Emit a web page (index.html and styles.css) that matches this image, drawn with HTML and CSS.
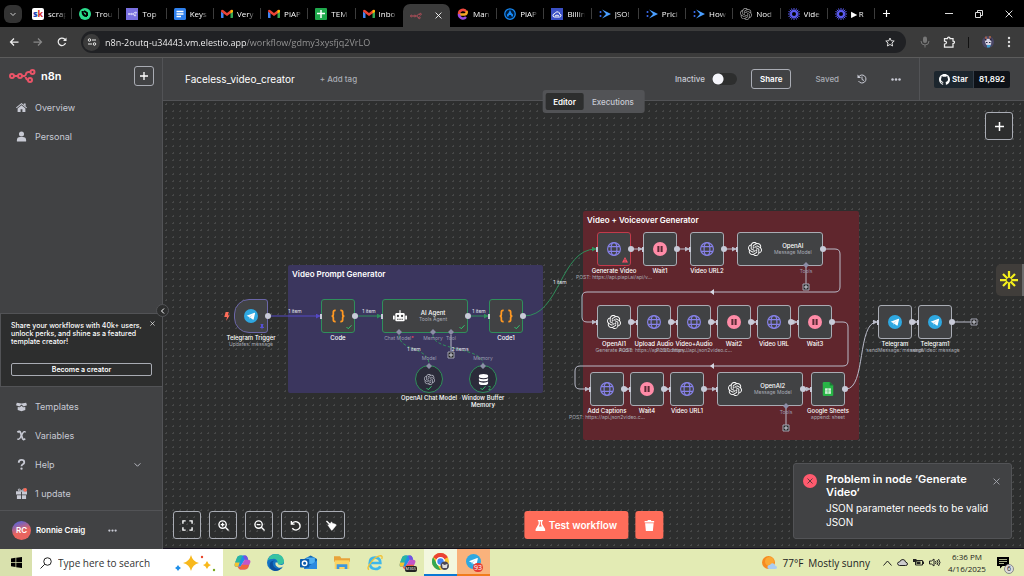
FILE: index.html
```html
<!DOCTYPE html>
<html lang="en">
<head>
    <meta charset="UTF-8">
    <meta name="viewport" content="width=device-width, initial-scale=1.0">
    <title>Faceless_video_creator - n8n</title>
    <link rel="stylesheet" href="styles.css">
</head>
<body>
    <!-- Icon set -->
    <svg class="sprite" aria-hidden="true">
        <symbol id="gmail" viewBox="0 0 24 24">
            <path fill="#4285f4" d="M1 20h4V11L0 7v11.500q0 1.500 1 1.500z"/>
            <path fill="#34a853" d="M19 20h4q1-.5 1-1.500V7l-5 4z"/>
            <path fill="#ea4335" d="M0 7V6q1-4 5-1.500l7 5.500 7-5.500q4-2.500 5 1.500v1l-5 4-7 5-7-5z"/>
            <path fill="#fbbc04" d="M19 11V5q4-3 5 1v2z"/>
        </symbol>
        <symbol id="n8n" viewBox="0 0 54 28">
            <g fill="none" stroke="currentColor" stroke-width="4">
                <circle cx="6" cy="14" r="4"/><circle cx="22" cy="14" r="4"/>
                <circle cx="47" cy="6" r="4"/><circle cx="42" cy="22" r="4"/>
                <path d="M10 14h8M26 14h5M43 6h-4q-4 0-5 4-1 4-3 4 2 0 3 4 1 4 4 4"/>
            </g>
        </symbol>
        <symbol id="flow" viewBox="0 0 24 24">
            <path d="M6 3l18 9-18 9 8-9z" fill="#4a9eff"/>
            <circle cx="3" cy="8" r="2" fill="#3b6ef5"/><circle cx="3" cy="16" r="2" fill="#3b6ef5"/>
        </symbol>
        <symbol id="burst" viewBox="0 0 24 24">
            <circle cx="12" cy="12" r="6" fill="none" stroke="currentColor" stroke-width="4"/>
            <path d="M12 0v5M12 19v5M0 12h5M19 12h5M3.500 3.500l4 4M16.500 16.500l4 4M20.500 3.500l-4 4M7.500 16.500l-4 4M7 1l2 5M15 18l2 5M17 1l-2 5M9 18l-2 5M1 7l5 2M18 15l5 2M1 17l5-2M18 9l5-2" stroke="currentColor" stroke-width="2"/>
        </symbol>
        <symbol id="openai" viewBox="0 0 24 24">
            <path fill="currentColor" d="M22.2819 9.8211a5.9847 5.9847 0 0 0-.5157-4.9108 6.0462 6.0462 0 0 0-6.5098-2.9A6.0651 6.0651 0 0 0 4.9807 4.1818a5.9847 5.9847 0 0 0-3.9977 2.9 6.0462 6.0462 0 0 0 .7427 7.0966 5.98 5.98 0 0 0 .511 4.9107 6.051 6.051 0 0 0 6.5146 2.9001A5.9847 5.9847 0 0 0 13.2599 24a6.0557 6.0557 0 0 0 5.7718-4.2058 5.9894 5.9894 0 0 0 3.9977-2.9001 6.0557 6.0557 0 0 0-.7475-7.0729zm-9.022 12.6081a4.4755 4.4755 0 0 1-2.8764-1.0408l.1419-.0804 4.7783-2.7582a.7948.7948 0 0 0 .3927-.6813v-6.7369l2.02 1.1686a.071.071 0 0 1 .038.052v5.5826a4.504 4.504 0 0 1-4.4945 4.4944zm-9.6607-4.1254a4.4708 4.4708 0 0 1-.5346-3.0137l.142.0852 4.783 2.7582a.7712.7712 0 0 0 .7806 0l5.8428-3.3685v2.3324a.0804.0804 0 0 1-.0332.0615L9.74 19.9502a4.4992 4.4992 0 0 1-6.1408-1.6464zM2.3408 7.8956a4.485 4.485 0 0 1 2.3655-1.9728V11.6a.7664.7664 0 0 0 .3879.6765l5.8144 3.3543-2.0201 1.1685a.0757.0757 0 0 1-.071 0l-4.8303-2.7865A4.504 4.504 0 0 1 2.3408 7.872zm16.5963 3.8558L13.1038 8.364 15.1192 7.2a.0757.0757 0 0 1 .071 0l4.8303 2.7913a4.4944 4.4944 0 0 1-.6765 8.1042v-5.6772a.79.79 0 0 0-.407-.667zm2.0107-3.0231l-.142-.0852-4.7735-2.7818a.7759.7759 0 0 0-.7854 0L9.409 9.2297V6.8974a.0662.0662 0 0 1 .0284-.0615l4.8303-2.7866a4.4992 4.4992 0 0 1 6.6802 4.66zM8.3065 12.863l-2.02-1.1638a.0804.0804 0 0 1-.038-.0567V6.0742a4.4992 4.4992 0 0 1 7.3757-3.4537l-.142.0805L8.704 5.459a.7948.7948 0 0 0-.3927.6813zm1.0976-2.3654l2.602-1.4998 2.6069 1.4998v2.9994l-2.5974 1.4997-2.6067-1.4997Z"/>
        </symbol>
        <symbol id="telegram" viewBox="0 0 24 24">
            <circle cx="12" cy="12" r="12" fill="#2fa8e1"/>
            <path fill="#fff" d="M4.500 11.700L18 6.300q1.200-.3.900 1.200l-2.300 10q-.4 1.200-1.500.6L8.800 13.600z"/>
            <path fill="#b5d5ea" d="M8.800 13.600l7-4.600-5.500 5.500-.4 3.500z"/>
        </symbol>
        <symbol id="globe" viewBox="0 0 24 24">
            <g fill="none" stroke="#8681e8" stroke-width="2">
                <circle cx="12" cy="12" r="11"/><ellipse cx="12" cy="12" rx="5" ry="11"/>
                <path d="M2 8h20M2 16h20"/>
            </g>
        </symbol>
        <symbol id="pause" viewBox="0 0 24 24">
            <circle cx="12" cy="12" r="12" fill="#ff8ba7"/>
            <path fill="#5c2b36" d="M7.500 7h3.500v10H7.500zM13 7h3.500v10H13z"/>
        </symbol>
        <symbol id="braces" viewBox="0 0 24 24">
            <path fill="none" stroke="#ff9922" stroke-width="3" d="M8 2.500H7q-3 0-3 3V9q0 3-3 3 3 0 3 3v3.500q0 3 3 3h1M16 2.500h1q3 0 3 3V9q0 3 3 3-3 0-3 3v3.500q0 3-3 3h-1"/>
        </symbol>
        <symbol id="robot" viewBox="0 0 24 24">
            <g fill="#fff">
                <rect x="4" y="7" width="16" height="14" rx="2"/><rect x="0" y="11" width="3" height="7" rx="1"/>
                <rect x="21" y="11" width="3" height="7" rx="1"/><rect x="11" y="2" width="2" height="6"/>
            </g>
            <circle cx="8.500" cy="12" r="2" fill="#414244"/><circle cx="15.500" cy="12" r="2" fill="#414244"/>
            <path fill="#414244" d="M7 16.500h2.500v2H7zM10.800 16.500h2.500v2h-2.500zM14.500 16.500H17v2h-2.500z"/>
        </symbol>
        <symbol id="database" viewBox="0 0 24 24">
            <g fill="#fff">
                <path d="M2 4q0-4 10-4t10 4v2q0 3-10 3T2 6z"/><path d="M2 9q3 2.500 10 2.500T22 9v4q0 3-10 3T2 13z"/>
                <path d="M2 16.500Q5 19 12 19t10-2.500V20q0 4-10 4T2 20z"/>
            </g>
        </symbol>
        <symbol id="sheets" viewBox="0 0 24 24">
            <path fill="#28b446" d="M3 2q0-2 2-2h10l6 6v16q0 2-2 2H5q-2 0-2-2z"/><path fill="#167a34" d="M15 0l6 6h-6z"/>
            <path fill="#fff" d="M7 11h10v9H7z"/><path stroke="#28b446" d="M7 14h10M7 17h10M12 11v9"/>
        </symbol>
        <symbol id="check" viewBox="0 0 12 12"><path fill="none" stroke="#34c26f" stroke-width="2" d="M1 6l3.500 3.500L11 2.500"/></symbol>
        <symbol id="pin" viewBox="0 0 12 12"><path fill="#5650d6" d="M3 0h6v1L8 2v3l2 2v1H7l-1 4-1-4H2V7l2-2V2L3 1z"/></symbol>
        <symbol id="warning" viewBox="0 0 12 12"><path fill="#ff4f63" d="M6 0l6 11H0z"/><path stroke="#414244" stroke-width="1.500" d="M6 4v3M6 8v1.500"/></symbol>
        <symbol id="bolt" viewBox="0 0 12 20"><path fill="#ff6d5a" d="M3 0h7L8 7h4L4 20l2-9H0z"/></symbol>
        <symbol id="plus" viewBox="0 0 12 12"><path stroke="currentColor" stroke-width="2" d="M6 0v12M0 6h12"/></symbol>
        <symbol id="cross" viewBox="0 0 12 12"><path stroke="currentColor" stroke-width="1.500" d="M1 1l10 10M11 1L1 11"/></symbol>
        <symbol id="dots" viewBox="0 0 20 6"><g fill="currentColor"><circle cx="3" cy="3" r="2.500"/><circle cx="10" cy="3" r="2.500"/><circle cx="17" cy="3" r="2.500"/></g></symbol>
        <symbol id="down" viewBox="0 0 12 12"><path fill="none" stroke="currentColor" stroke-width="1.500" d="M1 4l5 5 5-5"/></symbol>
        <symbol id="copilot" viewBox="0 0 24 24">
            <path fill="#1f8fe8" d="M9 2h7q2 0 3 3l1 3h-5L9 18H4q-4 0-3-4L4 6q1-4 5-4z"/>
            <path fill="#29b6a0" d="M4 6q1-4 5-4h3L8 12H1.500z"/>
            <path fill="#f2c531" d="M1.500 12H8l-2 6H4q-4 0-3-4z"/>
            <path fill="#c355c9" d="M15 22H9q-2 0-3-3l-1-1h4l6-10h5q4 0 3 4l-3 7q-1 3-5 3z"/>
            <path fill="#f0653f" d="M15 22H9q-2 0-3-3l-1-1h4l2-3h10l-1 4q-1 3-5 3z"/>
            <path fill="#7a4fe0" d="M16 2q2 0 3 3l1 3h-5l-2-6z"/>
        </symbol>
    </svg>

    <header class="tab-strip">
        <button class="tab-search" aria-label="Search tabs"><svg width="6" height="6"><use href="#down"/></svg></button>
        <div class="tabs">
            <div class="tab"><span class="tab-icon sk"><b>s</b>k</span><span class="tab-title">scrap</span></div>
            <div class="tab">
                <svg class="tab-icon" viewBox="0 0 24 24"><circle cx="12" cy="12" r="12" fill="#2bdc8c"/><path fill="none" stroke="#000" stroke-width="4" d="M7 6q0 10 9 10M10 6l6 4v6"/></svg>
                <span class="tab-title">Trou</span>
            </div>
            <div class="tab"><span class="tab-icon purple"><svg width="9" height="6"><use href="#n8n"/></svg></span><span class="tab-title">Top 1</span></div>
            <div class="tab">
                <svg class="tab-icon" viewBox="0 0 24 24"><rect width="24" height="24" rx="3" fill="#2f80ed"/><path stroke="#fff" stroke-width="3" d="M5 7h14M5 12h14M5 17h9"/></svg>
                <span class="tab-title">Keys</span>
            </div>
            <div class="tab"><svg class="tab-icon"><use href="#gmail"/></svg><span class="tab-title">Very</span></div>
            <div class="tab"><svg class="tab-icon"><use href="#gmail"/></svg><span class="tab-title">PiAP</span></div>
            <div class="tab">
                <svg class="tab-icon" viewBox="0 0 24 24"><rect width="24" height="24" rx="2" fill="#1fa84c"/><path stroke="#fff" stroke-width="3" d="M12 4v16M4 11h16"/></svg>
                <span class="tab-title">TEM</span>
            </div>
            <div class="tab last"><svg class="tab-icon"><use href="#gmail"/></svg><span class="tab-title">Inbo</span></div>
            <div class="tab active">
                <svg class="tab-icon"><use href="#n8n"/></svg>
                <button class="tab-close" aria-label="Close tab"><svg width="7" height="7"><use href="#cross"/></svg></button>
            </div>
            <div class="tab">
                <svg class="tab-icon" viewBox="0 0 24 24"><path fill="none" stroke="#f0483e" stroke-width="5" d="M4 12a8 8 0 0 1 15-4"/><path fill="none" stroke="#f7a823" stroke-width="5" d="M19 6q2 6-4 7H5"/><path fill="none" stroke="#9b4de0" stroke-width="5" d="M4 12a8 8 0 0 0 14 6"/></svg>
                <span class="tab-title">Man</span>
            </div>
            <div class="tab">
                <svg class="tab-icon" viewBox="0 0 24 24"><circle cx="12" cy="12" r="10.500" fill="#001c3a" stroke="#1689f5" stroke-width="2.500"/><path fill="#1689f5" d="M12 4l3 6 3 3v4h-3l-1-3h-4l-1 3H6v-4l3-3z"/></svg>
                <span class="tab-title">PiAP</span>
            </div>
            <div class="tab">
                <svg class="tab-icon" viewBox="0 0 24 24"><rect width="24" height="24" fill="#3a4fc4"/><path fill="none" stroke="#fff" stroke-width="2" d="M6 18q-3-1-2-4t4-3q2-5 7-3 2 1 2 4 4 1 3 4-1 2-3 2zM8 16q4-4 8 0"/></svg>
                <span class="tab-title">Billin</span>
            </div>
            <div class="tab"><svg class="tab-icon"><use href="#flow"/></svg><span class="tab-title">JSO!</span></div>
            <div class="tab"><svg class="tab-icon"><use href="#flow"/></svg><span class="tab-title">Prici</span></div>
            <div class="tab"><svg class="tab-icon"><use href="#flow"/></svg><span class="tab-title">How</span></div>
            <div class="tab"><svg class="tab-icon grey"><use href="#openai"/></svg><span class="tab-title">Nod</span></div>
            <div class="tab"><svg class="tab-icon violet"><use href="#burst"/></svg><span class="tab-title">Vide</span></div>
            <div class="tab"><svg class="tab-icon violet"><use href="#burst"/></svg><span class="tab-title">▶ R</span></div>
        </div>
        <button class="new-tab" aria-label="New tab"><svg width="7" height="7"><use href="#plus"/></svg></button>
        <div class="window-buttons">
            <button aria-label="Minimize"><svg width="8" height="8" viewBox="0 0 8 8"><path stroke="#ddd" d="M0 3.500h8"/></svg></button>
            <button aria-label="Restore"><svg width="8" height="8" viewBox="0 0 8 8"><path fill="none" stroke="#ddd" d="M.5 2.500h5v5h-5zM2.500 2V.5h5v5H6"/></svg></button>
            <button aria-label="Close"><svg width="8" height="8"><use href="#cross"/></svg></button>
        </div>
    </header>

    <div class="toolbar">
        <button aria-label="Back"><svg width="10" height="10" viewBox="0 0 20 20"><path fill="none" stroke="#eee" stroke-width="2.500" d="M19 10H3M10 3l-7 7 7 7"/></svg></button>
        <button aria-label="Forward"><svg width="10" height="10" viewBox="0 0 20 20"><path fill="none" stroke="#888" stroke-width="2.500" d="M1 10h16M10 3l7 7-7 7"/></svg></button>
        <button aria-label="Reload"><svg width="10" height="10" viewBox="0 0 20 20"><path fill="none" stroke="#eee" stroke-width="2.500" d="M17 12a7.500 7.500 0 1 1-2-8l3 3"/><path fill="#eee" d="M19 1v7h-7z"/></svg></button>
        <div class="omnibox">
            <span class="site-info"><svg width="10" height="10" viewBox="0 0 20 20"><g fill="none" stroke="#eee" stroke-width="2"><circle cx="5" cy="6" r="2.500"/><path d="M10 6h8M2 14h8"/><circle cx="15" cy="14" r="2.500"/></g></svg></span>
            <input type="text" class="url" aria-label="Address" value="n8n-2outq-u34443.vm.elestio.app/workflow/gdmy3xysfjq2VrLO">
            <svg width="10" height="10" viewBox="0 0 20 20"><path fill="none" stroke="#ddd" stroke-width="2" d="M10 2l2.400 5.500 6 .5-4.500 4 1.400 6L10 15l-5.300 3 1.400-6L1.600 8l6-.5z"/></svg>
        </div>
        <div class="toolbar-end">
            <svg width="10" height="12" viewBox="0 0 20 24"><rect x="6" y="1" width="8" height="13" rx="4" fill="#777"/><path fill="none" stroke="#777" stroke-width="2" d="M2 10q0 8 8 8t8-8M10 18v5"/></svg>
            <svg width="12" height="12" viewBox="0 0 24 24"><path fill="none" stroke="#eee" stroke-width="2.500" d="M3 5h6q0-3 2.500-3T14 5h6v5q3 0 3 2.500T20 15v7H3v-6q4 0 4-3t-4-3z"/></svg>
            <span class="divider"></span>
            <svg width="12" height="12" viewBox="0 0 24 24"><circle cx="12" cy="12" r="12" fill="#4a4766"/><path fill="#d8d4e4" d="M5 8q7-5 14 0l-1 9q-5 5-10 0z"/><path fill="#23233f" d="M6 4l4 4-5 2zM18 3l-3 5 5 2zM8 12h3v2H8zM14 12h3v2h-3z"/><path fill="#e8793d" d="M7 1h2v5H7zM15 0h2v5h-2z"/><path fill="#3f9bc9" d="M10 18h8l-3 5h-5z"/></svg>
            <svg width="4" height="12" viewBox="0 0 4 12"><g fill="#ddd"><circle cx="2" cy="2" r="1.200"/><circle cx="2" cy="6" r="1.200"/><circle cx="2" cy="10" r="1.200"/></g></svg>
        </div>
    </div>

    <div class="app">
        <aside class="sidebar">
            <div class="brand">
                <svg class="logo" width="27" height="14"><use href="#n8n"/></svg>
                <span>n8n</span>
                <button class="square-btn small" aria-label="Add"><svg width="8" height="8"><use href="#plus"/></svg></button>
            </div>
            <nav class="menu">
                <a href="#"><svg viewBox="0 0 24 22"><path d="M12 1l12 10-1.500 1.500L12 4 1.500 12.500 0 11zM17 2h4v6l-4-3.500zM12 6l8.500 7v8H14v-6h-4v6H3.500v-8z"/></svg>Overview</a>
                <a href="#"><svg viewBox="0 0 24 24"><circle cx="12" cy="6.500" r="5.500"/><path d="M2 23v-3q0-7 7-7h6q7 0 7 7v3z"/></svg>Personal</a>
            </nav>
            <section class="callout">
                <p>Share your workflows with 40k+ users, unlock perks, and shine as a featured template creator!</p>
                <button class="callout-close" aria-label="Dismiss"><svg width="5" height="5"><use href="#cross"/></svg></button>
                <button class="callout-btn">Become a creator</button>
            </section>
            <nav class="menu bottom">
                <a href="#"><svg viewBox="0 0 26 22"><path d="M2 2l11 2 11-2 2 6-8 3-5-5-5 5-8-3zM4 12l5 1 4-4 4 4 5-1v7l-9 3-9-3z"/></svg>Templates</a>
                <a href="#"><svg viewBox="0 0 24 24"><path fill="none" stroke="currentColor" stroke-width="4" d="M3 5q5-4 7 1l4 12q2 5 6 1"/><path fill="none" stroke="currentColor" stroke-width="3" d="M21 5q-3-4-7 3l-5 9q-3 5-6 2"/></svg>Variables</a>
                <a href="#"><svg viewBox="0 0 24 24"><path fill="none" stroke="currentColor" stroke-width="4" d="M6 8q0-6 6-6t6 5q0 3-3 4.500T12 16"/><circle cx="12" cy="21" r="2.500"/></svg>Help<svg class="chevron"><use href="#down"/></svg></a>
                <a href="#"><svg viewBox="0 0 24 24"><path d="M0 7h11v7H0zM13 7h11v7H13zM2 16h9v8H2zM13 16h9v8h-9z"/><path fill="none" stroke="currentColor" stroke-width="2" d="M12 7Q3 7 5 3t7 4q5-8 7-4t-7 4"/><circle cx="20" cy="4" r="4" fill="#ff6d5a"/></svg>1 update</a>
            </nav>
            <div class="user">
                <span class="avatar">RC</span>
                <span class="user-name">Ronnie Craig</span>
                <button aria-label="User menu"><svg width="9" height="3"><use href="#dots"/></svg></button>
            </div>
            <button class="collapse" aria-label="Collapse sidebar"><svg width="6" height="6" viewBox="0 0 12 12"><path fill="none" stroke="#fff" stroke-width="2" d="M8 1L3 6l5 5"/></svg></button>
        </aside>

        <main class="main">
            <div class="workflow-header">
                <h1>Faceless_video_creator</h1>
                <button class="add-tag">+ Add tag</button>
                <div class="actions">
                    <label class="activator">Inactive <input type="checkbox"></label>
                    <button class="share">Share</button>
                    <span class="saved">Saved</span>
                    <button aria-label="History"><svg width="10" height="10" viewBox="0 0 20 20"><path fill="none" stroke="currentColor" stroke-width="2" d="M3 6a8 8 0 1 1 0 8M10 5v6l4 2"/><path fill="currentColor" d="M1 1v7h7z"/></svg></button>
                    <button aria-label="More"><svg width="10" height="3"><use href="#dots"/></svg></button>
                </div>
                <div class="github">
                    <a href="#" class="gh-star"><svg width="11" height="11" viewBox="0 0 16 16"><path fill="#fff" d="M8 0C3.580 0 0 3.580 0 8c0 3.540 2.290 6.530 5.470 7.590.4.070.55-.17.55-.38 0-.19-.01-.82-.01-1.490-2.010.37-2.530-.49-2.690-.94-.09-.23-.48-.94-.82-1.130-.28-.15-.68-.52-.01-.53.63-.01 1.080.58 1.230.82.72 1.210 1.870.87 2.330.66.070-.52.28-.87.51-1.070-1.780-.2-3.640-.89-3.640-3.950 0-.87.31-1.590.82-2.150-.08-.2-.36-1.020.08-2.120 0 0 .67-.21 2.200.82.64-.18 1.320-.27 2-.27s1.360.09 2 .27c1.530-1.040 2.200-.82 2.200-.82.44 1.100.16 1.920.08 2.120.51.56.82 1.270.82 2.150 0 3.070-1.870 3.750-3.650 3.950.29.25.54.73.54 1.480 0 1.070-.01 1.930-.01 2.200 0 .21.15.46.55.38A8.010 8.010 0 0 0 16 8c0-4.420-3.580-8-8-8Z"/></svg>Star</a>
                    <a href="#" class="gh-count">81,892</a>
                </div>
                <div class="view-switch">
                    <button class="selected">Editor</button>
                    <button>Executions</button>
                </div>
            </div>

            <div class="canvas" id="canvas">
                <section class="sticky prompt"><h2>Video Prompt Generator</h2></section>
                <section class="sticky voiceover"><h2>Video + Voiceover Generator</h2></section>

                <svg class="edges" aria-hidden="true">
                    <defs>
                        <marker id="arrow" viewBox="0 0 6 6" refX="5" refY="3" markerWidth="5" markerHeight="5" orient="auto" markerUnits="userSpaceOnUse"><path d="M0 0l6 3-6 3z" fill="context-stroke"/></marker>
                    </defs>
                    <path class="pinned" d="M106 215H157"/>
                    <path class="ok" d="M193 215H218"/>
                    <path class="ok" d="M305 215H325"/>
                    <path class="ok" d="M361 215C397 215 397 148 433 148"/>
                    <path class="link" d="M468 148H479"/><path class="link" d="M515 148H526"/><path class="link" d="M562 148H573"/>
                    <path class="link" d="M660 148H672Q677 148 677 153V186Q677 191 672 191H424Q419 191 419 196V216Q419 221 424 221H433"/>
                    <path class="link" d="M469 221H473"/><path class="link" d="M509 221H513"/><path class="link" d="M549 221H553"/><path class="link" d="M589 221H593"/><path class="link" d="M629 221H634"/>
                    <path class="link" d="M669 221H680Q685 221 685 226V260Q685 265 680 265H417Q412 265 412 270V283Q412 288 417 288H426"/>
                    <path class="link" d="M462 288H466"/><path class="link" d="M502 288H506"/><path class="link" d="M542 288H553"/><path class="link" d="M641 288H647"/>
                    <path class="link" d="M683 288C703 288 694 221 714 221"/>
                    <path class="link" d="M749 221H754"/>
                    <path class="stub" d="M790 221H808M643 166V183M623 307V324M288 234V250"/>
                    <path class="sub" d="M236 234C236 250 266 246 266 263M270 234C270 250 320 246 320 263"/>
                    <path class="turn" d="M547 191l4-3v6zM547 265l4-3v6z"/>
                    <path class="diamond" d="M236 228l3 3-3 3-3-3zM270 228l3 3-3 3-3-3zM288 228l3 3-3 3-3-3zM643 161l3 3-3 3-3-3zM623 302l3 3-3 3-3-3zM266 262l3 3-3 3-3-3zM320 262l3 3-3 3-3-3z"/>
                    <path class="add-box" d="M285 251h6v6h-6zM640 183h6v6h-6zM620 324h6v6h-6zM808 218h6v6h-6z"/>
                    <path class="add-sign" d="M288 252v4M286 254h4M643 184v4M641 186h4M623 325v4M621 327h4M811 219v4M809 221h4"/>
                    <g class="edge-label">
                        <text x="132" y="212">1 item</text><text x="206" y="212">1 item</text>
                        <text x="316" y="212">1 item</text><text x="397" y="183">1 item</text>
                        <text x="251" y="250">1 item</text><text x="297" y="250">2 items</text>
                    </g>
                    <g class="port-label">
                        <text x="236" y="239">Chat Model<tspan fill="#ff4f63">*</tspan></text><text x="270" y="239">Memory</text><text x="288" y="239">Tool</text>
                        <text x="266" y="259">Model</text><text x="320" y="259">Memory</text>
                        <text x="643" y="172">Tools</text><text x="623" y="313">Tools</text>
                    </g>
                </svg>

                <button class="square-btn add-node" aria-label="Add node"><svg width="9" height="9"><use href="#plus"/></svg></button>
                <button class="assistant" aria-label="Ask assistant">
                    <svg width="18" height="18" viewBox="0 0 24 24"><path stroke="#f4f01c" stroke-width="3" d="M12 0v9M12 15v9M0 12h9M15 12h9M4 4l6 6M14 14l6 6M20 4l-6 6M10 14l-6 6"/></svg>
                </button>

                <div class="controls">
                    <button class="square-btn" aria-label="Fit view"><svg viewBox="0 0 24 24"><path d="M2 8V2h6M16 2h6v6M22 16v6h-6M8 22H2v-6"/></svg></button>
                    <button class="square-btn" aria-label="Zoom in"><svg viewBox="0 0 24 24"><circle cx="10" cy="10" r="8"/><path d="M16 16l7 7M10 6v8M6 10h8"/></svg></button>
                    <button class="square-btn" aria-label="Zoom out"><svg viewBox="0 0 24 24"><circle cx="10" cy="10" r="8"/><path d="M16 16l7 7M6 10h8"/></svg></button>
                    <button class="square-btn" aria-label="Reset zoom"><svg viewBox="0 0 24 24"><path d="M3 2v7h7M3 9q5-7 12-5t7 9-9 9q-5 0-8-4"/></svg></button>
                    <button class="square-btn" aria-label="Tidy up"><svg viewBox="0 0 24 24"><path d="M1 2l9 9"/><path fill="#fff" stroke-width="1" d="M4 11l4-1 4-6 2 3 8 3q1 2-1 3l-7 9q-2 1-3-1z"/></svg></button>
                </div>

                <div class="run">
                    <button class="primary"><svg width="10" height="11" viewBox="0 0 20 22"><path fill="#fff" d="M5 0h10v2.500h-1.500V8L20 19q1 3-2 3H2q-3 0-2-3L6.500 8V2.500H5z"/><path fill="#ff6d5a" d="M9 3h2v6l2 4H7l2-4z"/></svg>Test workflow</button>
                    <button class="primary trash" aria-label="Clear execution"><svg width="10" height="11" viewBox="0 0 20 22"><path fill="#fff" d="M0 2h6l1-2h6l1 2h6v3H0zM1.500 6.500h17L17 22H3z"/></svg></button>
                </div>

                <div class="toast" role="alert">
                    <span class="toast-icon"><svg width="6" height="6"><use href="#cross"/></svg></span>
                    <div>
                        <h2>Problem in node ‘Generate Video‘</h2>
                        <p>JSON parameter needs to be valid JSON</p>
                    </div>
                    <button aria-label="Close"><svg width="7" height="7"><use href="#cross"/></svg></button>
                </div>
            </div>
        </main>
    </div>

    <footer class="taskbar">
        <button class="start" aria-label="Start"><svg width="11" height="11" viewBox="0 0 22 22"><path d="M0 3l9-1.500V10H0zM10.500 1.300L22 0v10H10.500zM0 11.500h9V20l-9-1.500zM10.500 11.500H22V22l-11.500-1.500z"/></svg></button>
        <label class="search">
            <svg width="12" height="12" viewBox="0 0 24 24"><circle cx="15" cy="9" r="7.500" fill="none" stroke="#222" stroke-width="2"/><path stroke="#222" stroke-width="2" d="M9.500 14.500L1 23"/></svg>
            <input type="text" placeholder="Type here to search" aria-label="Search Windows">
            <svg width="42" height="18" viewBox="0 0 42 18">
                <path fill="#f8b81c" d="M16 1q1.500 6.500 8 8-6.500 1.500-8 8-1.500-6.500-8-8 6.500-1.500 8-8z"/>
                <path fill="#f8b81c" d="M32 7q1 3 4 4-3 1-4 4-1-3-4-4 3-1 4-4z"/>
                <path fill="#1f8fe8" d="M3 11q1 2 3 3-2 1-3 3-1-2-3-3 2-1 3-3z"/>
                <circle cx="27" cy="3" r="1.200" fill="#e8452c"/><circle cx="39" cy="16" r="1.200" fill="#7aa81f"/>
            </svg>
        </label>
        <div class="task-icons">
            <button aria-label="Copilot"><svg width="17" height="17"><use href="#copilot"/></svg></button>
            <button aria-label="Edge"><svg width="17" height="17" viewBox="0 0 24 24"><circle cx="12" cy="12" r="12" fill="#1473c4"/><path fill="#37c4a0" d="M1 9Q4 0 13 0q10 1 11 10 0 5-6 5-4 0-3-3-1-6-7-5-5 0-7 2z"/><path fill="#0c4f9c" d="M8 12q0 8 8 9 4 0 6-3-4 6-11 6Q2 22 4 13q2-4 7-4-3 1-3 3z"/><path fill="#e3ebb4" d="M15 12q0 4 6 3.500L24 14v3q-4 3-8 2-5-2-4-7z"/></svg></button>
            <button aria-label="Outlook"><svg width="17" height="15" viewBox="0 0 24 20"><path fill="#1066b5" d="M6 5l9-5 9 5v14H6z"/><path fill="#50b0f0" d="M9 3h12v9H9z"/><path fill="#2b8ae0" d="M6 19L24 7v12z"/><rect y="5" width="13" height="12" rx="1" fill="#0b5cad"/><circle cx="6.500" cy="11" r="3.200" fill="none" stroke="#fff" stroke-width="2"/></svg></button>
            <button aria-label="File Explorer"><svg width="16" height="14" viewBox="0 0 24 20"><path fill="#e8a33a" d="M0 0h9l2 3h13v5H0z"/><path fill="#fcd462" d="M1 6h22v13H1z"/><path fill="#3f97dd" d="M4 19v-7h16v7h-4v-3H8v3z"/></svg></button>
            <button aria-label="Internet Explorer"><svg width="16" height="16" viewBox="0 0 24 24"><path fill="none" stroke="#3fb8ea" stroke-width="4" d="M6 12h14q0-8-8-8t-8 9q1 8 9 8 5 0 7-4"/><path fill="none" stroke="#f0c236" stroke-width="2" d="M3 22Q-1 20 6 11T20 1q4 0 2 5"/></svg></button>
            <button aria-label="Microsoft 365 Copilot"><svg width="17" height="17"><use href="#copilot"/></svg><span class="m365">M365</span></button>
            <button class="open" aria-label="Chrome"><svg width="17" height="17" viewBox="0 0 24 24"><circle cx="12" cy="12" r="12" fill="#fcc934"/><path fill="#ea4335" d="M12 12L1.600 6A12 12 0 0 1 22.400 6z"/><path fill="#34a853" d="M1.600 6L12 24A12 12 0 0 1 1.600 6z"/><circle cx="12" cy="12" r="5.500" fill="#4285f4" stroke="#fff" stroke-width="2"/><circle cx="18" cy="18" r="6" fill="#4a4655"/><path fill="#ddd" d="M14 15l4 2 4-2-1 6h-6z"/></svg></button>
            <button class="alerting" aria-label="Telegram"><svg width="15" height="15"><use href="#telegram"/></svg><span class="count">93</span></button>
        </div>
        <div class="tray">
            <span class="weather">
                <svg width="15" height="14" viewBox="0 0 30 28"><circle cx="13" cy="13" r="13" fill="#f68a1f"/><circle cx="15" cy="11" r="9" fill="#fba834"/><path fill="#a9cdf2" d="M14 26q-4-1-3-5t5-3q2-5 7-3 3 1 3 4 4 1 4 4t-4 3z"/></svg>
                <span>77°F</span><span>Mostly sunny</span>
            </span>
            <svg width="9" height="6" viewBox="0 0 18 12"><path fill="none" stroke="#222" stroke-width="2" d="M1 11l8-9 8 9"/></svg>
            <svg width="11" height="7" viewBox="0 0 22 14"><path fill="#ccc" stroke="#222" stroke-width="2" d="M5 13q-4-1-4-4t4-3q2-5 7-5 5 1 5 5 4 1 4 4t-4 3z"/></svg>
            <svg width="11" height="7" viewBox="0 0 22 14"><path fill="none" stroke="#222" stroke-width="2" d="M5 3h14v9H5z"/><path fill="#222" d="M7 5h8v5H7zM19 5h3v5h-3zM0 0h7v6H0z"/></svg>
            <svg width="12" height="9" viewBox="0 0 24 18"><path fill="none" stroke="#222" stroke-width="2" d="M1 6h4l5-4v14l-5-4H1zM13 6q2 3 0 6M16 4q4 5 0 10M19 2q6 7 0 14"/></svg>
            <time><span>6:36 PM</span><span>4/16/2025</span></time>
            <span class="notify"><svg width="13" height="12" viewBox="0 0 26 24"><path d="M0 0h24v18H11l-5 5v-5H0z"/><path stroke="#e3ebb4" stroke-width="1.500" d="M4 5h16M4 9h16M4 13h10"/></svg><span class="badge">6</span></span>
        </div>
    </footer>

    <script src="script.js"></script>
</body>
</html>
```

FILE: styles.css
```css
/* Base */
* {
    box-sizing: border-box;
}
body {
    margin: 0;
    height: 100vh;
    display: flex;
    flex-direction: column;
    overflow: hidden;
    background: #2d2e2e;
    color: #fff;
    font-family: Inter, "Liberation Sans", sans-serif;
    font-size: 9px;
}
button {
    margin: 0;
    padding: 0;
    border: none;
    background: none;
    color: inherit;
    font: inherit;
    display: flex;
    align-items: center;
    justify-content: center;
    cursor: pointer;
}
a {
    color: inherit;
    text-decoration: none;
}
h1, h2, p {
    margin: 0;
}
svg {
    display: block;
    flex: none;
}
.sprite {
    position: absolute;
    width: 0;
    height: 0;
}

/* Browser tabs */
.tab-strip {
    height: 27px;
    flex: none;
    display: flex;
    align-items: center;
    background: #000;
    font-family: "Open Sans", "Noto Sans", sans-serif;
    font-size: 8px;
}
.tab-search {
    width: 18px;
    height: 18px;
    margin: 0 3px 0 4px;
    border-radius: 6px;
    background: #333;
}
.tabs {
    width: 83%;
    align-self: stretch;
    display: flex;
}
.tab {
    flex: 1 1 0;
    min-width: 0;
    display: flex;
    align-items: center;
    gap: 4px;
    padding-left: 7px;
    position: relative;
}
.tab::after {
    content: "";
    margin-left: auto;
    width: 1px;
    height: 11px;
    background: #3c3c3c;
}
.tab.active::after, .tab.last::after {
    display: none;
}
.tab.active {
    margin-top: 4px;
    border-radius: 7px 7px 0 0;
    background: #3b3b3b;
    color: #fff;
}
.tab.active .tab-icon {
    color: #b8505c;
}
.tab-icon {
    width: 12px;
    height: 12px;
    flex: none;
}
.tab-icon.sk {
    border-radius: 2px;
    background: #fff;
    color: #d42b2b;
    font: bold 9px/12px "Open Sans", sans-serif;
    text-align: center;
}
.sk b {
    color: #2346b8;
}
.tab-icon.purple {
    display: flex;
    align-items: center;
    justify-content: center;
    background: #7a70e0;
}
.tab-icon.grey {
    color: #999;
}
.tab-icon.violet {
    color: #5b5bf0;
}
.tab-title {
    width: 18px;
    overflow: hidden;
    white-space: nowrap;
    -webkit-mask-image: linear-gradient(90deg, #000 60%, transparent);
    mask-image: linear-gradient(90deg, #000 60%, transparent);
}
.tab-close {
    margin-left: 9px;
}
.new-tab {
    width: 24px;
    align-self: stretch;
}
.window-buttons {
    margin-left: auto;
    display: flex;
    align-self: stretch;
}
.window-buttons button {
    width: 30px;
    color: #ddd;
}

/* Browser toolbar */
.toolbar {
    height: 31px;
    flex: none;
    display: flex;
    align-items: center;
    gap: 14px;
    padding: 0 13px 0 9px;
    background: #3b3b3b;
    border-bottom: 1px solid #5c5c5c;
}
.omnibox {
    flex: 1;
    height: 22px;
    display: flex;
    align-items: center;
    gap: 5px;
    padding: 0 11px 0 2px;
    border-radius: 11px;
    background: #202124;
}
.site-info {
    width: 17px;
    height: 17px;
    display: flex;
    align-items: center;
    justify-content: center;
    border-radius: 50%;
    background: #3b3b3b;
}
.url {
    flex: 1;
    min-width: 0;
    padding: 0;
    border: none;
    outline: none;
    font: 9px "Open Sans", "Noto Sans", sans-serif;
    color: transparent;
    background: linear-gradient(90deg, #fff 141px, #9a9a9a 141px);
    -webkit-background-clip: text;
    background-clip: text;
}
.toolbar-end {
    display: flex;
    align-items: center;
    gap: 13px;
}
.divider {
    width: 1px;
    height: 11px;
    background: #111;
}

/* App layout */
.app {
    flex: 1;
    min-height: 0;
    display: flex;
}
.sidebar {
    width: 163px;
    flex: none;
    display: flex;
    flex-direction: column;
    position: relative;
    background: #414244;
    border-right: 1px solid #525356;
}
.brand {
    display: flex;
    align-items: center;
    gap: 5px;
    padding: 8px 8px 7px 9px;
    font-size: 11px;
    font-weight: 600;
}
.brand .square-btn {
    margin-left: auto;
}
.logo {
    color: #ea5468;
}
.square-btn {
    width: 28px;
    height: 28px;
    border: 1px solid #a9acb4;
    border-radius: 3px;
    color: #fff;
}
.square-btn.small {
    width: 20px;
    height: 20px;
}
.menu {
    color: #c8cad4;
}
.menu a {
    height: 29px;
    display: flex;
    align-items: center;
    gap: 8px;
    padding: 0 21px 0 16px;
}
.menu svg {
    width: 11px;
    height: 11px;
    fill: currentColor;
}
.menu .chevron {
    width: 7px;
    height: 7px;
    margin-left: auto;
}
.callout {
    margin-top: auto;
    height: 74px;
    padding: 8px 10px 10px;
    display: flex;
    flex-direction: column;
    justify-content: space-between;
    position: relative;
    background: #2d2e2e;
    border: 1px solid #525356;
    border-right: none;
}
.callout p {
    padding-right: 10px;
    font-size: 7px;
    font-weight: 500;
    line-height: 8px;
}
.callout-close {
    position: absolute;
    top: 7px;
    right: 7px;
}
.callout-btn {
    height: 13px;
    border: 1px solid #a9acb4;
    border-radius: 2px;
    font-size: 7px;
    font-weight: 600;
}
.menu.bottom {
    padding: 5px 0 2px;
}
.user {
    height: 39px;
    display: flex;
    align-items: center;
    gap: 5px;
    padding: 0 12px;
    border-top: 1px solid #525356;
    font-size: 8px;
    font-weight: 600;
}
.user button {
    margin-left: 18px;
    color: #c8cad4;
}
.avatar {
    width: 19px;
    height: 19px;
    border-radius: 50%;
    background: linear-gradient(160deg, #6b63c9 15%, #e8645f 55%);
    font-size: 8px;
    line-height: 19px;
    text-align: center;
}
.collapse {
    position: absolute;
    right: -7px;
    top: 246px;
    z-index: 3;
    width: 13px;
    height: 13px;
    border: 1px solid #525356;
    border-radius: 50%;
    background: #2d2e2e;
}

/* Workflow header */
.main {
    flex: 1;
    min-width: 0;
    display: flex;
    flex-direction: column;
}
.workflow-header {
    height: 43px;
    flex: none;
    display: flex;
    align-items: center;
    position: relative;
    padding-left: 22px;
    background: #414244;
    border-bottom: 1px solid #525356;
    font-size: 8px;
    font-weight: 500;
    color: #c8cad4;
}
.workflow-header h1 {
    color: #fff;
    font-size: 10px;
    font-weight: 400;
}
.add-tag {
    margin-left: 25px;
    color: #a9acb4;
}
.actions {
    margin-left: auto;
    display: flex;
    align-items: center;
    gap: 24px;
    padding-right: 18px;
}
.activator {
    display: flex;
    align-items: center;
    gap: 7px;
}
.activator input {
    appearance: none;
    width: 25px;
    height: 12px;
    margin: 0 -10px 0 0;
    border-radius: 6px;
    background: radial-gradient(circle at 6px 6px, #f5f5fb 5px, transparent 6px) #2d2e2e;
}
.share {
    height: 20px;
    padding: 0 8px;
    border: 1px solid #a9acb4;
    border-radius: 3px;
    color: #fff;
    font-weight: 600;
}
.saved {
    margin-right: -6px;
    color: #a9acb4;
}
.github {
    align-self: stretch;
    display: flex;
    align-items: center;
    padding: 0 14px;
    border-left: 1px solid #525356;
    color: #fff;
    font-weight: 600;
}
.github a {
    height: 17px;
    display: flex;
    align-items: center;
    gap: 2px;
    padding: 0 5px;
}
.gh-star {
    border-radius: 2px 0 0 2px;
    background: #1c262e;
    border-right: 1px solid #333d48;
}
.gh-count {
    border-radius: 0 2px 2px 0;
    background: #0d1117;
}
.view-switch {
    position: absolute;
    left: 50%;
    top: 32px;
    z-index: 2;
    transform: translateX(-50%);
    display: flex;
    padding: 3px;
    border-radius: 3px;
    background: #525356;
}
.view-switch button {
    height: 17px;
    padding: 0 8px;
    border-radius: 2px;
}
.view-switch .selected {
    background: #2d2e2e;
    color: #fff;
    font-weight: 600;
}

/* Canvas */
.canvas {
    flex: 1;
    min-height: 0;
    position: relative;
    overflow: hidden;
    border-bottom: 1px solid #15101f;
    background: radial-gradient(circle, #464747 0, #464747 1px, transparent 1px) 0 0 / 7px 7px #2d2e2e;
}
.sticky {
    position: absolute;
    padding: 4px;
    border-radius: 2px;
}
.sticky h2 {
    font-size: 8px;
    font-weight: 600;
    line-height: 10px;
}
.sticky.prompt {
    left: 125px;
    top: 164px;
    width: 255px;
    height: 128px;
    background: #3b365e;
}
.sticky.voiceover {
    left: 420px;
    top: 110px;
    width: 276px;
    height: 229px;
    background: #60262d;
}
.edges {
    position: absolute;
    left: 0;
    top: 0;
    z-index: 1;
    width: 100%;
    height: 100%;
    fill: none;
}
.link, .ok, .pinned {
    marker-end: url(#arrow);
}
.link, .stub {
    stroke: #b9bac8;
}
.ok, .sub {
    stroke: #2f8f5b;
}
.pinned {
    stroke: #5549c4;
}
.sub {
    stroke-dasharray: 3 2;
}
.turn {
    fill: #d5d7e2;
}
.diamond {
    fill: #8c8da6;
}
.add-box {
    stroke: #a5a6b4;
    fill: #222;
}
.add-sign {
    stroke: #d5d7e2;
}
.edge-label, .port-label {
    font-size: 5px;
    text-anchor: middle;
}
.edge-label {
    fill: #e4e4ee;
}
.port-label {
    fill: #9a9bb0;
}

/* Nodes */
.node {
    position: absolute;
    width: 34px;
    height: 34px;
    display: flex;
    align-items: center;
    justify-content: center;
    border: 1px solid #a9acb4;
    border-radius: 3px;
    background: #414244;
}
.node.wide {
    width: 86px;
    justify-content: flex-start;
    gap: 12px;
    padding-left: 10px;
}
.node.round {
    width: 28px;
    height: 28px;
    border-radius: 50%;
    background: #2b2b3a;
}
.node.trigger {
    border-color: #6b66a8;
    border-radius: 15px 3px 3px 15px;
}
.node.success {
    border-color: #2f8f5b;
}
.node.error {
    border-color: #c23a4b;
}
.node-icon {
    width: 14px;
    height: 14px;
}
.round .node-icon {
    width: 11px;
    height: 11px;
    color: #b4b6c2;
}
.status {
    position: absolute;
    right: 2px;
    bottom: 2px;
    width: 6px;
    height: 6px;
}
.round .status {
    right: 10px;
    bottom: 1px;
}
.runs {
    position: absolute;
    right: 5px;
    bottom: 1px;
    color: #34c26f;
    font-size: 5px;
    line-height: 6px;
}
.bolt {
    position: absolute;
    left: -11px;
    top: 12px;
    width: 6px;
    height: 9px;
}
.node-text {
    position: absolute;
    top: 100%;
    left: 50%;
    z-index: 2;
    transform: translateX(-50%);
    margin-top: 2px;
    text-align: center;
    white-space: pre;
    font-size: 6px;
    font-weight: 500;
    line-height: 7px;
}
.node-text small {
    display: block;
    font-size: 5px;
    font-weight: 400;
    color: #a9acb4;
}
.wide .node-text {
    position: static;
    transform: none;
    margin: 0;
}
.handle-in, .handle-out {
    position: absolute;
    z-index: 2;
    background: #c8cad8;
}
.handle-in {
    left: -2px;
    top: 14px;
    width: 2px;
    height: 5px;
}
.handle-out {
    right: -4px;
    top: 13px;
    width: 6px;
    height: 6px;
    border-radius: 50%;
}

/* Floating canvas controls */
.add-node {
    position: absolute;
    top: 11px;
    right: 11px;
    background: #2d2e2e;
}
.assistant {
    position: absolute;
    top: 163px;
    right: 0;
    width: 28px;
    height: 32px;
    border-radius: 5px 0 0 5px;
    border-right: 2px solid #6b6b6b;
    background: #403d3a;
}
.controls {
    position: absolute;
    left: 10px;
    bottom: 9px;
    display: flex;
    gap: 8px;
}
.controls svg {
    width: 11px;
    height: 11px;
    fill: none;
    stroke: #fff;
    stroke-width: 3;
}
.run {
    position: absolute;
    left: 50%;
    bottom: 9px;
    transform: translateX(-50%);
    display: flex;
    gap: 7px;
}
.primary {
    height: 28px;
    padding: 0 11px;
    gap: 4px;
    border-radius: 3px;
    background: #ff6d5a;
    font-size: 10px;
    font-weight: 600;
    white-space: nowrap;
}
.primary.trash {
    width: 28px;
    padding: 0;
}
.toast {
    position: absolute;
    right: 12px;
    bottom: 9px;
    z-index: 4;
    width: 219px;
    display: flex;
    align-items: flex-start;
    gap: 9px;
    padding: 9px 11px 9px 9px;
    border: 1px solid #525356;
    border-radius: 3px;
    background: #414244;
}
.toast div {
    flex: 1;
    margin-right: -8px;
}
.toast h2 {
    font-size: 11px;
    font-weight: 600;
    line-height: 13px;
}
.toast p {
    margin-top: 2px;
    font-size: 10px;
    line-height: 14px;
}
.toast button {
    margin-top: 5px;
    color: #a9acb4;
}
.toast-icon {
    width: 14px;
    height: 14px;
    margin-top: 1px;
    display: flex;
    align-items: center;
    justify-content: center;
    border-radius: 50%;
    background: #ff5a6e;
    color: #2d2e2e;
}

/* Taskbar */
.taskbar {
    height: 27px;
    flex: none;
    display: flex;
    background: #e3ebb4;
    color: #222;
    font-family: "Open Sans", "Noto Sans", sans-serif;
}
.start {
    width: 32px;
    background: #d9e1ad;
}
.search {
    width: 191px;
    display: flex;
    align-items: center;
    gap: 6px;
    padding: 0 6px 0 8px;
    background: #fff;
}
.search input {
    flex: 1;
    min-width: 0;
    padding: 0;
    border: none;
    outline: none;
    background: none;
    font: 10px "Open Sans", "Noto Sans", sans-serif;
}
.search input::placeholder {
    color: #333;
}
.task-icons {
    display: flex;
    margin-left: 3px;
}
.task-icons button {
    width: 33px;
    position: relative;
}
.task-icons .open {
    background: #f3f7df;
    border-bottom: 2px solid #0a78d4;
}
.task-icons .alerting {
    background: #f9b27c;
    border-bottom: 2px solid #f07c1c;
}
.count {
    position: absolute;
    right: 7px;
    bottom: 2px;
    padding: 0 1px;
    border-radius: 5px;
    background: #e63b35;
    color: #fff;
    font-size: 7px;
    line-height: 9px;
}
.m365 {
    position: absolute;
    right: 7px;
    bottom: 4px;
    padding: 0 1px;
    border-radius: 2px;
    background: #222;
    color: #fff;
    font-size: 4px;
    line-height: 6px;
}
.tray {
    margin-left: auto;
    display: flex;
    align-items: center;
    gap: 5px;
    padding-right: 14px;
}
.weather {
    display: flex;
    align-items: center;
    gap: 5px;
    margin-right: 8px;
    font-size: 10px;
}
.tray time {
    width: 38px;
    margin-left: 2px;
    display: flex;
    flex-direction: column;
    align-items: center;
    font-size: 8px;
    line-height: 12px;
}
.notify {
    position: relative;
    margin-left: 6px;
}
.badge {
    position: absolute;
    right: -4px;
    bottom: -5px;
    width: 10px;
    height: 10px;
    border: 1px solid #888;
    border-radius: 50%;
    background: #ddd;
    font-size: 7px;
    line-height: 8px;
    text-align: center;
}
```

FILE: script.js
```js
// Workflow nodes: position on the canvas, icon, name and state
const nodes = [
    { x: 71, y: 198, icon: "telegram", name: "Telegram Trigger", sub: "Updates: message", type: "trigger", status: "pin", input: false },
    { x: 158, y: 198, icon: "braces", name: "Code", type: "success", status: "check" },
    { x: 219, y: 198, icon: "robot", name: "AI Agent", sub: "Tools Agent", type: "wide success", status: "check" },
    { x: 326, y: 198, icon: "braces", name: "Code1", type: "success", status: "check" },
    { x: 252, y: 264, icon: "openai", name: "OpenAI Chat Model", type: "round success", status: "check", input: false, output: false },
    { x: 306, y: 264, icon: "database", name: "Window Buffer\nMemory", type: "round success", status: "check", runs: 2, input: false, output: false },
    { x: 434, y: 131, icon: "globe", name: "Generate Video", sub: "POST: https://api.piapi.ai/api/v...", type: "error", status: "warning" },
    { x: 480, y: 131, icon: "pause", name: "Wait1" },
    { x: 527, y: 131, icon: "globe", name: "Video URL2" },
    { x: 574, y: 131, icon: "openai", name: "OpenAI", sub: "Message Model", type: "wide" },
    { x: 434, y: 204, icon: "openai", name: "OpenAI1", sub: "Generate Audio" },
    { x: 474, y: 204, icon: "globe", name: "Upload Audio", sub: "POST: https://api.cloudinary..." },
    { x: 514, y: 204, icon: "globe", name: "Video+Audio", sub: "POST: https://api.json2video.c..." },
    { x: 554, y: 204, icon: "pause", name: "Wait2" },
    { x: 594, y: 204, icon: "globe", name: "Video URL" },
    { x: 635, y: 204, icon: "pause", name: "Wait3" },
    { x: 427, y: 271, icon: "globe", name: "Add Captions", sub: "POST: https://api.json2video.c..." },
    { x: 467, y: 271, icon: "pause", name: "Wait4" },
    { x: 507, y: 271, icon: "globe", name: "Video URL1" },
    { x: 554, y: 271, icon: "openai", name: "OpenAI2", sub: "Message Model", type: "wide" },
    { x: 648, y: 271, icon: "sheets", name: "Google Sheets", sub: "append: sheet" },
    { x: 715, y: 204, icon: "telegram", name: "Telegram", sub: "sendMessage: message" },
    { x: 755, y: 204, icon: "telegram", name: "Telegram1", sub: "sendVideo: message" }
];

const canvas = document.getElementById("canvas");
const edges = canvas.querySelector(".edges");

nodes.forEach(function(node) {
    const el = document.createElement("div");
    el.className = "node " + (node.type || "");
    el.style.left = node.x + "px";
    el.style.top = node.y + "px";

    let html = '<svg class="node-icon"><use href="#' + node.icon + '"/></svg>';
    html += '<div class="node-text">' + node.name + (node.sub ? "<small>" + node.sub + "</small>" : "") + "</div>";
    if (node.status) {
        html += '<svg class="status"><use href="#' + node.status + '"/></svg>';
    }
    if (node.runs) {
        html += '<span class="runs">' + node.runs + "</span>";
    }
    if (node.type === "trigger") {
        html += '<svg class="bolt"><use href="#bolt"/></svg>';
    }
    if (node.input !== false) {
        html += '<span class="handle-in"></span>';
    }
    if (node.output !== false) {
        html += '<span class="handle-out"></span>';
    }
    el.innerHTML = html;
    canvas.insertBefore(el, edges);
});
```
